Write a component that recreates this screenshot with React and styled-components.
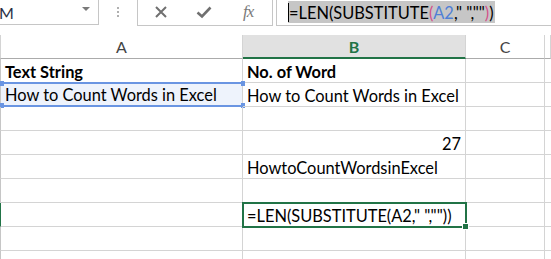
import React from 'react'
import styled, { createGlobalStyle } from 'styled-components'

const GlobalStyle = createGlobalStyle`
  html, body {
    margin: 0;
    padding: 0;
    background: #fff;
    overflow: hidden;
  }
  body {
    font-family: Lato, "Open Sans", "Liberation Sans", sans-serif;
    color: #000;
  }
`

const COLS = '243px 223px 79px 1fr'

function App() {
  return (
    <Page>
      <GlobalStyle />
      <Toolbar>
        <NameBox>
          <NameText>M</NameText>
          <DropArrow />
        </NameBox>
        <Grip>
          <Dot /><Dot /><Dot />
        </Grip>
        <FxBox>
          <IconBtn>
            <svg width="14" height="14" viewBox="0 0 14 14">
              <path d="M2 2 L12 12 M12 2 L2 12" stroke="#707070" strokeWidth="2" fill="none" />
            </svg>
          </IconBtn>
          <IconBtn>
            <svg width="16" height="14" viewBox="0 0 16 14">
              <path d="M1.5 7.5 L6 11.5 L14.5 2.5" stroke="#707070" strokeWidth="2.6" fill="none" />
            </svg>
          </IconBtn>
          <IconBtn>
            <Fx>fx</Fx>
          </IconBtn>
        </FxBox>
        <FormulaBox>
          <Selected>
            <Caret />
            =LEN(SUBSTITUTE<Paren>(</Paren><Ref>A2</Ref>," ",""<Paren>)</Paren>)
          </Selected>
        </FormulaBox>
      </Toolbar>

      <Sheet>
        <HeaderRow>
          <ColHead>A</ColHead>
          <ColHead $selected>B</ColHead>
          <ColHead>C</ColHead>
          <ColHead />
        </HeaderRow>

        <Row>
          <Cell $bold>Text String</Cell>
          <Cell $bold>No. of Word</Cell>
          <Cell />
          <Cell />
        </Row>
        <Row>
          <Cell $refCell>
            How to Count Words in Excel
            <Handle $pos="tl" /><Handle $pos="tr" /><Handle $pos="bl" /><Handle $pos="br" />
          </Cell>
          <Cell>How to Count Words in Excel</Cell>
          <Cell />
          <Cell />
        </Row>
        <Row>
          <Cell /><Cell /><Cell /><Cell />
        </Row>
        <Row>
          <Cell />
          <Cell $right>27</Cell>
          <Cell />
          <Cell />
        </Row>
        <Row>
          <Cell />
          <Cell>HowtoCountWordsinExcel</Cell>
          <Cell />
          <Cell />
        </Row>
        <Row>
          <Cell /><Cell /><Cell /><Cell />
        </Row>
        <Row $activeRow>
          <Cell />
          <Cell $active>
            =LEN(SUBSTITUTE(A2," ",""))
            <FillHandle />
          </Cell>
          <Cell />
          <Cell />
        </Row>
        <Row>
          <Cell /><Cell /><Cell /><Cell />
        </Row>
        <Row>
          <Cell /><Cell /><Cell /><Cell />
        </Row>
      </Sheet>
    </Page>
  )
}

export default App

const Page = styled.div`
  width: 551px;
  height: 259px;
  overflow: hidden;
`

const Toolbar = styled.div`
  display: flex;
  height: 26px;
`

const NameBox = styled.div`
  width: 99px;
  height: 25px;
  border-right: 1px solid #c6c6c6;
  border-bottom: 1px solid #c6c6c6;
  display: flex;
  align-items: center;
  justify-content: space-between;
  padding-right: 8px;
  box-sizing: border-box;
`

const NameText = styled.span`
  font-size: 16px;
  color: #2a2f45;
  margin-left: -1px;
`

const DropArrow = styled.span`
  width: 0;
  height: 0;
  border-left: 4px solid transparent;
  border-right: 4px solid transparent;
  border-top: 4px solid #7a7a7a;
  margin-top: -6px;
`

const Grip = styled.div`
  width: 38px;
  display: flex;
  flex-direction: column;
  align-items: center;
  gap: 2px;
  padding-top: 7px;
  box-sizing: border-box;
`

const Dot = styled.span`
  width: 2px;
  height: 2px;
  background: #b0b0b0;
`

const FxBox = styled.div`
  width: 136px;
  height: 26px;
  box-sizing: border-box;
  border-left: 1px solid #c6c6c6;
  border-right: 1px solid #c6c6c6;
  border-bottom: 1px solid #c6c6c6;
  display: flex;
  align-items: center;
  justify-content: space-around;
  padding: 0 4px 2px 2px;
`

const IconBtn = styled.span`
  width: 22px;
  display: flex;
  justify-content: center;
  align-items: center;
`

const Fx = styled.span`
  font-family: "Liberation Serif", serif;
  font-style: italic;
  font-size: 17px;
  color: #7a7a7a;
  letter-spacing: -1px;
  margin-left: 3px;
`

const FormulaBox = styled.div`
  flex: 1;
  margin-left: 3px;
  height: 26px;
  box-sizing: border-box;
  border-left: 1px solid #c6c6c6;
  border-bottom: 1px solid #c6c6c6;
  padding: 1px 0 0 11px;
`

const Selected = styled.span`
  display: inline-flex;
  align-items: center;
  height: 22px;
  background: #c6c6c6;
  font-size: 16.4px;
  padding-right: 1px;
  white-space: pre;
`

const Caret = styled.span`
  width: 1px;
  height: 19px;
  background: #000;
`

const Paren = styled.span`
  color: #d4508a;
`

const Ref = styled.span`
  color: #4f7fd6;
`

const Sheet = styled.div`
  margin-top: 9px;
`

const HeaderRow = styled.div`
  display: grid;
  grid-template-columns: ${COLS};
  height: 24px;
`

const ColHead = styled.div`
  display: flex;
  align-items: center;
  justify-content: center;
  font-size: 16px;
  box-sizing: border-box;
  border-right: 1px solid #d4d4d4;
  border-bottom: ${p => (p.$selected ? '2px solid #217346' : '1px solid #ababab')};
  background: ${p => (p.$selected ? '#e1e1e1' : '#fff')};
  color: ${p => (p.$selected ? '#217346' : '#444')};
  font-weight: ${p => (p.$selected ? 700 : 400)};
  &:first-child {
    border-left: 1px solid #d4d4d4;
  }
`

const Row = styled.div`
  display: grid;
  grid-template-columns: ${COLS};
  height: 24px;
  & > div:first-child {
    border-left: 1px solid ${p => (p.$activeRow ? '#217346' : '#c6c6c6')};
  }
`

const Cell = styled.div`
  position: relative;
  box-sizing: border-box;
  height: 24px;
  border-right: 1px solid #d4d4d4;
  border-bottom: 1px solid #d4d4d4;
  font-size: 16.4px;
  line-height: 23px;
  padding: 1px 4px 0 4px;
  white-space: nowrap;
  text-align: ${p => (p.$right ? 'right' : 'left')};
  font-weight: ${p => (p.$bold ? 700 : 400)};
  ${p => p.$refCell && `
    background: #eef3fc;
    border-top: 2px solid #6a95e2;
    border-bottom: 2px solid #6a95e2;
    margin-top: -1px;
    height: 25px;
    line-height: 20px;
  `}
  ${p => p.$active && `
    border: 2px solid #217346;
    margin: -1px 0 0 -1px;
    height: 26px;
    width: 225px;
    line-height: 21px;
    padding-left: 3px;
    z-index: 1;
  `}
`

const Handle = styled.span`
  position: absolute;
  width: 4px;
  height: 5px;
  background: #6a95e2;
  ${p => (p.$pos[0] === 't' ? 'top: -3px;' : 'bottom: -3px;')}
  ${p => (p.$pos[1] === 'l' ? 'left: -1px;' : 'right: -3px;')}
`

const FillHandle = styled.span`
  position: absolute;
  width: 5px;
  height: 5px;
  background: #217346;
  border: 1px solid #fff;
  right: -4px;
  bottom: -4px;
`
